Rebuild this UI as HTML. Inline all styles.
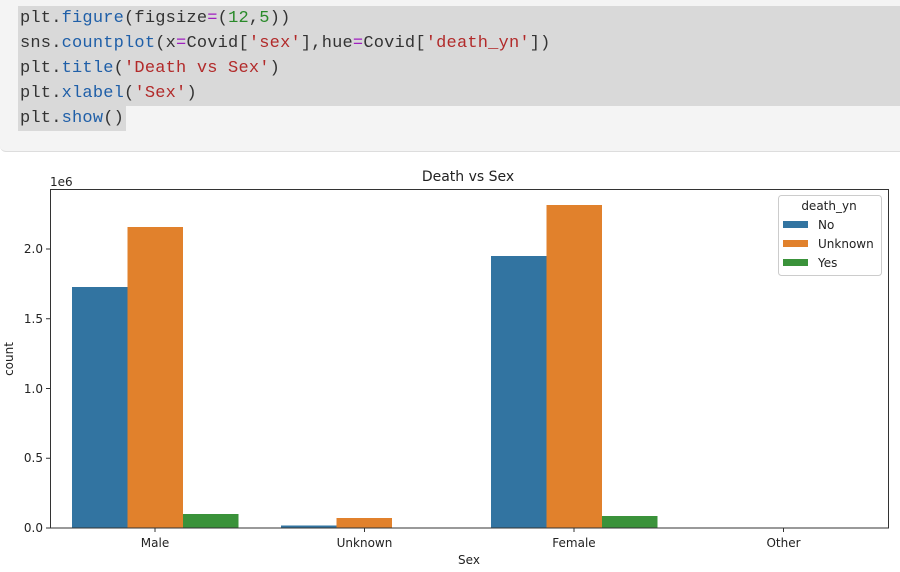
<!DOCTYPE html>
<html><head><style>
body{margin:0;width:900px;height:572px;background:#fff;overflow:hidden;position:relative;font-family:"Liberation Sans",sans-serif}
.cell{position:absolute;left:0;top:0;width:900px;height:151px;background:#f4f4f4;border-bottom:1px solid #ddd;border-radius:0 0 0 6px}
.code{position:absolute;left:18px;top:6px;font-family:"Liberation Mono",monospace;font-size:17px;line-height:25px;color:#333;letter-spacing:0.2px}
.code div{height:25px;padding-left:2px;white-space:pre}
.hl{background:#d9d9d9}
.f{color:#1f5fa8}.s{color:#b22a2a}.n{color:#2a8a2a}.o{color:#a020c0}
</style></head><body>
<div class="cell"></div>
<div class="code">
<div class="hl" style="width:882px">plt.<span class="f">figure</span>(figsize<span class="o">=</span>(<span class="n">12</span>,<span class="n">5</span>))</div>
<div class="hl" style="width:882px">sns.<span class="f">countplot</span>(x<span class="o">=</span>Covid[<span class="s">'sex'</span>],hue<span class="o">=</span>Covid[<span class="s">'death_yn'</span>])</div>
<div class="hl" style="width:882px">plt.<span class="f">title</span>(<span class="s">'Death vs Sex'</span>)</div>
<div class="hl" style="width:882px">plt.<span class="f">xlabel</span>(<span class="s">'Sex'</span>)</div>
<div class="hl" style="width:106px">plt.<span class="f">show</span>()</div>
</div>
<svg width="900" height="572" style="position:absolute;left:0;top:0" font-family="DejaVu Sans, Liberation Sans, sans-serif" font-size="12" fill="#222">
<text x="468" y="181" text-anchor="middle" font-size="14">Death vs Sex</text>
<text x="50" y="186" font-size="12">1e6</text>
<g>
<rect x="72" y="287" width="55.5" height="241" fill="#3274a1"/>
<rect x="127.5" y="227" width="55.5" height="301" fill="#e1812c"/>
<rect x="183" y="514" width="55.5" height="14" fill="#3a923a"/>
<rect x="281" y="525.5" width="55.5" height="2.5" fill="#3274a1"/>
<rect x="336.5" y="518" width="55.5" height="10" fill="#e1812c"/>
<rect x="491" y="256" width="55.5" height="272" fill="#3274a1"/>
<rect x="546.5" y="205" width="55.5" height="323" fill="#e1812c"/>
<rect x="602" y="516" width="55.5" height="12" fill="#3a923a"/>
</g>
<rect x="50.5" y="189.5" width="838" height="338.5" fill="none" stroke="#333" stroke-width="1"/>
<g stroke="#333">
<line x1="46" y1="528" x2="50" y2="528"/><line x1="46" y1="458.25" x2="50" y2="458.25"/><line x1="46" y1="388.5" x2="50" y2="388.5"/><line x1="46" y1="318.75" x2="50" y2="318.75"/><line x1="46" y1="249" x2="50" y2="249"/>
<line x1="155" y1="528" x2="155" y2="532"/><line x1="364.5" y1="528" x2="364.5" y2="532"/><line x1="574" y1="528" x2="574" y2="532"/><line x1="783.5" y1="528" x2="783.5" y2="532"/>
</g>
<g text-anchor="end">
<text x="43" y="532">0.0</text><text x="43" y="462">0.5</text><text x="43" y="393">1.0</text><text x="43" y="323">1.5</text><text x="43" y="253">2.0</text>
</g>
<g text-anchor="middle">
<text x="155" y="547">Male</text><text x="364.5" y="547">Unknown</text><text x="574" y="547">Female</text><text x="783.5" y="547">Other</text>
<text x="469" y="564">Sex</text>
</g>
<text transform="translate(13,359) rotate(-90)" text-anchor="middle">count</text>
<rect x="778.5" y="195.5" width="103" height="80" rx="3" fill="#fff" stroke="#ccc"/>
<text x="829" y="210" text-anchor="middle">death_yn</text>
<rect x="783" y="221" width="25" height="7" fill="#3274a1"/><text x="818" y="229">No</text>
<rect x="783" y="240" width="25" height="7" fill="#e1812c"/><text x="818" y="248">Unknown</text>
<rect x="783" y="259" width="25" height="7" fill="#3a923a"/><text x="818" y="267">Yes</text>
</svg>
</body></html>
